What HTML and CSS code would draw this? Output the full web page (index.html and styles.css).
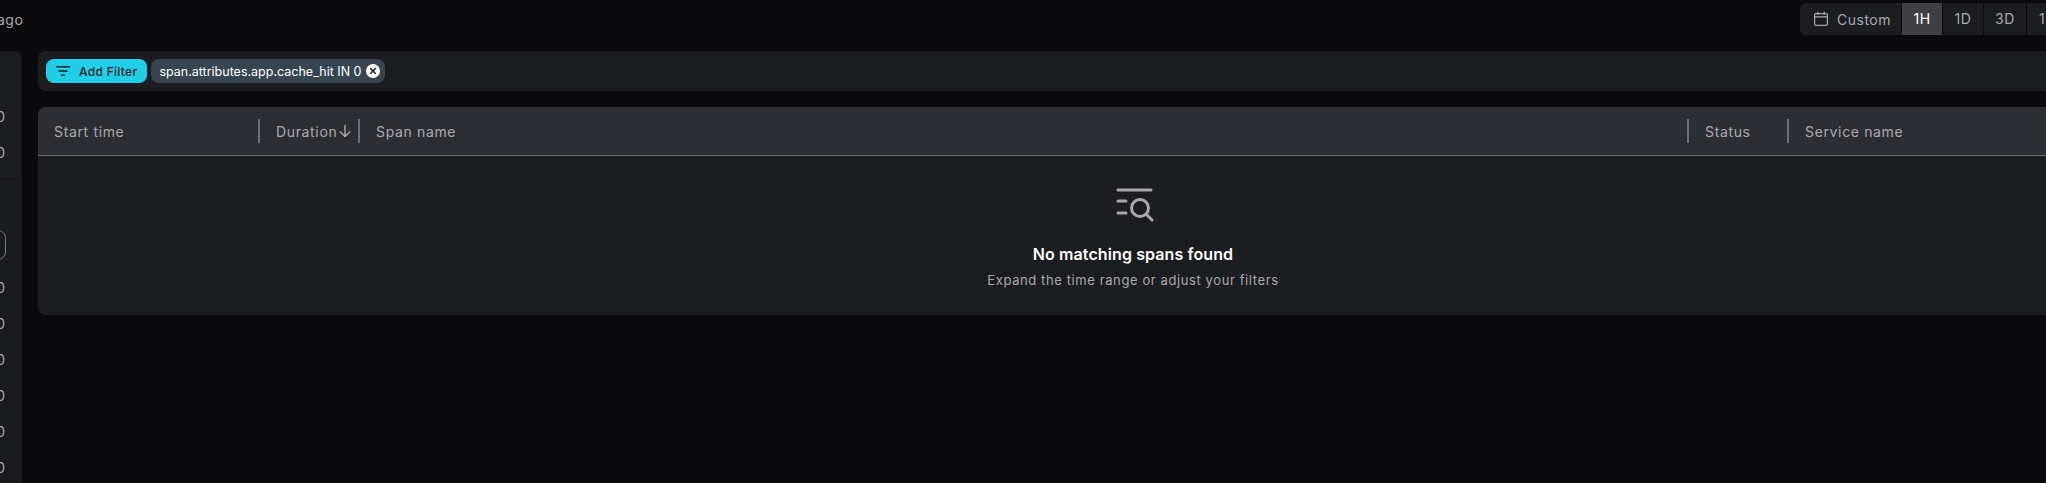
FILE: index.html
```html
<!DOCTYPE html>
<html lang="en">
<head>
    <meta charset="UTF-8">
    <title>Spans</title>
    <link rel="stylesheet" href="styles.css">
</head>
<body>
    <div class="topbar">
        <span class="ago">ago</span>
        <div class="range">
            <div class="range-custom">
                <svg width="16" height="16" viewBox="0 0 16 16" fill="none" stroke="currentColor" stroke-width="1.2">
                    <rect x="1.6" y="2.6" width="12.8" height="11.8" rx="1.4"></rect>
                    <path d="M1.6 5.9h12.8M4.8 .8v3M11.2 .8v3"></path>
                </svg>
                Custom
            </div>
            <div class="range-btn current">1H</div>
            <div class="range-btn">1D</div>
            <div class="range-btn wide">3D</div>
            <div class="range-btn">1Y</div>
        </div>
    </div>
    <div class="main">
        <div class="sidebar">
            <div class="side-card">
                <div class="side-row">0</div>
                <div class="side-row">0</div>
            </div>
            <div class="side-search"></div>
            <div class="side-list">
                <div class="side-row">0</div>
                <div class="side-row">0</div>
                <div class="side-row">0</div>
                <div class="side-row">0</div>
                <div class="side-row">0</div>
                <div class="side-row">0</div>
            </div>
        </div>
        <div class="content">
            <div class="filter-bar">
                <div class="add-filter">
                    <svg width="16" height="16" viewBox="0 0 16 16" fill="none" stroke="currentColor" stroke-width="1.4" stroke-linecap="round">
                        <path d="M1.5 3.8h13M4 8h8M6.5 12.2h3"></path>
                    </svg>
                    Add Filter
                </div>
                <div class="chip">
                    span.attributes.app.cache_hit IN 0
                    <svg class="chip-close" width="14" height="14" viewBox="0 0 14 14">
                        <circle cx="7" cy="7" r="7" fill="#fff"></circle>
                        <path d="M4.6 4.6l4.8 4.8M9.4 4.6l-4.8 4.8" stroke="#2f3b45" stroke-width="1.6" stroke-linecap="round"></path>
                    </svg>
                </div>
            </div>
            <div class="table">
                <div class="thead">
                    <div class="th col-start">Start time<i class="divider"></i></div>
                    <div class="th col-duration">
                        Duration
                        <svg class="sort-arrow" width="14" height="14" viewBox="0 0 14 14" fill="none" stroke="currentColor" stroke-width="1.4" stroke-linecap="round" stroke-linejoin="round">
                            <path d="M7 1.5v11M2.2 7.8L7 12.6l4.8-4.8"></path>
                        </svg>
                        <i class="divider"></i>
                    </div>
                    <div class="th col-name">Span name<i class="divider"></i></div>
                    <div class="th col-status">Status<i class="divider"></i></div>
                    <div class="th col-service">Service name</div>
                </div>
                <div class="empty">
                    <svg class="empty-icon" width="38" height="34" viewBox="0 0 38 34" fill="none" stroke="#a9a9ad" stroke-width="3" stroke-linecap="round">
                        <path d="M2 2h33M2 13h8M2 25h8"></path>
                        <circle cx="24" cy="20" r="8.5"></circle>
                        <path d="M30.5 26.5l5.5 5.5"></path>
                    </svg>
                    <div class="empty-title">No matching spans found</div>
                    <div class="empty-text">Expand the time range or adjust your filters</div>
                </div>
            </div>
        </div>
    </div>
</body>
</html>
```

FILE: styles.css
```css
* {
    margin: 0;
    padding: 0;
    box-sizing: border-box;
}
html, body {
    height: 483px;
    overflow: hidden;
}
body {
    background-color: #0a0a0c;
    font-family: Inter, "Liberation Sans", sans-serif;
    color: #a9a9ad;
}
.topbar {
    display: flex;
    align-items: flex-start;
    height: 51px;
    padding-top: 3px;
}
.ago {
    margin-left: -3px;
    line-height: 34px;
    font-size: 14px;
    letter-spacing: 0.5px;
    color: #a9a9ad;
}
.range {
    display: flex;
    flex: none;
    gap: 1px;
    height: 32px;
    margin-left: auto;
    margin-right: -21px;
    font-size: 14px;
    letter-spacing: 0.5px;
}
.range-custom {
    display: flex;
    align-items: center;
    gap: 8px;
    width: 101px;
    padding-left: 13px;
    background-color: #1c1d21;
    border-radius: 6px 0 0 6px;
}
.range-btn {
    width: 40px;
    line-height: 32px;
    text-align: center;
    background-color: #1c1d21;
}
.range-btn.wide {
    width: 42px;
}
.range-btn.current {
    background-color: #414145;
    color: #fff;
}
.main {
    display: flex;
    gap: 16px;
    height: 432px;
}
.sidebar {
    flex: none;
    width: 22px;
    overflow: hidden;
    background-color: #1a1b1f;
    border-radius: 0 8px 0 0;
}
.side-card {
    height: 128px;
    padding-top: 48px;
    background-color: #1c1d21;
    border-bottom: 1px solid #141519;
    border-right: 1px solid #141519;
    border-radius: 0 8px 8px 0;
}
.side-row {
    height: 36px;
    margin-left: -100px;
    padding-right: 17px;
    line-height: 36px;
    font-size: 14px;
    text-align: right;
    color: #a9a9ad;
}
.side-card .side-row {
    padding-right: 16px;
}
.side-search {
    width: 106px;
    height: 30px;
    margin: 51px 0 10px -100px;
    border: 1px solid #77787d;
    border-radius: 8px;
}
.content {
    flex: none;
    width: 2190px;
}
.filter-bar {
    display: flex;
    align-items: center;
    gap: 4px;
    height: 40px;
    padding-left: 8px;
    background-color: #1c1d21;
    border-radius: 8px;
}
.add-filter {
    display: flex;
    align-items: center;
    gap: 8px;
    height: 24px;
    padding: 0 10px 0 9px;
    background-color: #1fcfe8;
    border-radius: 8px;
    font-size: 12px;
    font-weight: 500;
    color: #0c1a20;
    letter-spacing: 0.3px;
}
.chip {
    display: flex;
    align-items: center;
    gap: 5px;
    height: 24px;
    padding: 0 5px 0 8px;
    background-color: #374550;
    border-radius: 8px;
    font-size: 12.5px;
    color: #fff;
}
.table {
    margin-top: 16px;
    border-radius: 8px;
    overflow: hidden;
    background-color: #1c1d21;
}
.thead {
    display: flex;
    height: 49px;
    background-color: #2d2e33;
    border-bottom: 1px solid #6a6b70;
}
.th {
    display: flex;
    align-items: center;
    flex: none;
    padding-left: 16px;
    font-size: 14px;
    letter-spacing: 0.65px;
    color: #a9a9ad;
}
.col-start {
    width: 222px;
}
.col-duration {
    width: 100px;
}
.col-name {
    width: 1329px;
}
.col-status {
    width: 100px;
}
.col-service {
    flex: 1;
}
.divider {
    width: 2px;
    height: 24px;
    margin-left: auto;
    background-color: #6f7075;
}
.sort-arrow {
    margin-left: 1px;
}
.empty {
    display: flex;
    flex-direction: column;
    align-items: center;
    height: 159px;
    padding-top: 32px;
}
.empty-icon {
    display: block;
    margin-left: 4px;
}
.empty-title {
    margin-top: 20px;
    line-height: 24px;
    font-size: 16px;
    font-weight: 600;
    letter-spacing: 0.1px;
    color: #fff;
}
.empty-text {
    margin-top: 3px;
    line-height: 22px;
    font-size: 13px;
    letter-spacing: 0.6px;
    color: #a9a9ad;
}
```
